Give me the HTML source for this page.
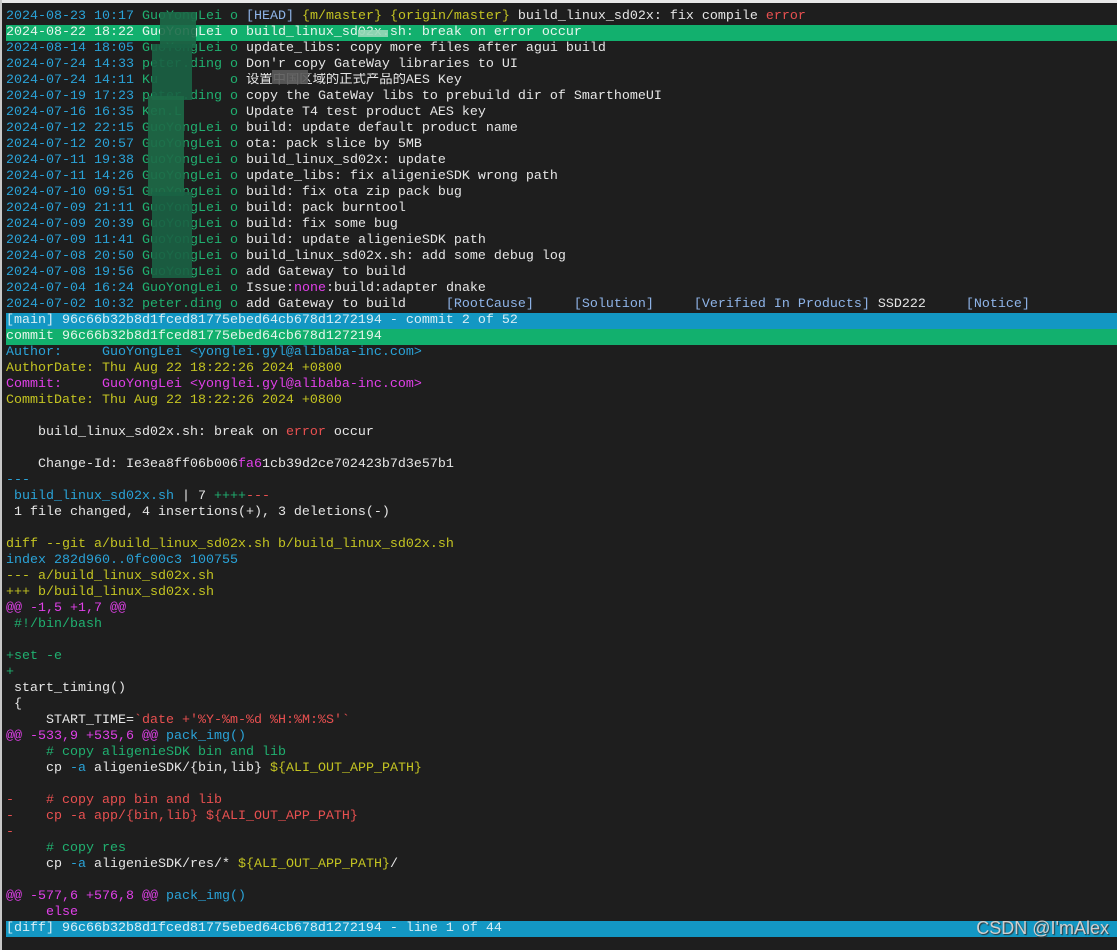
<!DOCTYPE html>
<html><head><meta charset="utf-8"><style>
html,body{margin:0;padding:0;}
body{width:1117px;height:950px;background:#1e1e1e;position:relative;overflow:hidden;}
.top{position:absolute;left:0;top:0;width:1117px;height:3px;background:#e8e8e8;}
.lft{position:absolute;left:0;top:0;width:2px;height:950px;background:#c8c8c8;}
pre{position:absolute;left:6px;top:9px;margin:0;font-family:"Liberation Mono","Noto Sans CJK SC",monospace;font-size:13.33px;line-height:16px;color:#e6e6e6;white-space:pre;}
.l{display:block;height:16px;overflow:hidden;}
.b{color:#2aa3d8}.g{color:#20b070}.y{color:#c4c422}.m{color:#e040e8}.r{color:#e85050}.bl{color:#8fb4e8}
.hg{background:#12b06e;color:#e6f5ec;width:1111px}
.hb{background:#1397c3;color:#d8eef6;width:1111px}
.blob{position:absolute;background:#1c6a48;opacity:.9}
.wm{position:absolute;right:8px;top:918px;font-family:"Liberation Sans",sans-serif;font-size:18px;color:#cfcfcf;text-shadow:1px 1px 1px #333;}
</style></head><body>
<div class="top"></div><div class="lft"></div>
<pre><span class="l"><span class="b">2024-08-23 10:17</span> <span class="g">GuoYongLei o</span> <span class="bl">[HEAD]</span> <span class="y">{m/master} {origin/master}</span> build_linux_sd02x: fix compile <span class="r">error</span></span><span class="l hg">2024-08-22 18:22 GuoYongLei o build_linux_sd02x.sh: break on error occur</span><span class="l"><span class="b">2024-08-14 18:05</span> <span class="g">GuoYongLei o</span> update_libs: copy more files after agui build</span><span class="l"><span class="b">2024-07-24 14:33</span> <span class="g">peter.ding o</span> Don'r copy GateWay libraries to UI</span><span class="l"><span class="b">2024-07-24 14:11</span> <span class="g">Ku         o</span> 设置中国区域的正式产品的AES Key</span><span class="l"><span class="b">2024-07-19 17:23</span> <span class="g">peter.ding o</span> copy the GateWay libs to prebuild dir of SmarthomeUI</span><span class="l"><span class="b">2024-07-16 16:35</span> <span class="g">Ken.L      o</span> Update T4 test product AES key</span><span class="l"><span class="b">2024-07-12 22:15</span> <span class="g">GuoYongLei o</span> build: update default product name</span><span class="l"><span class="b">2024-07-12 20:57</span> <span class="g">GuoYongLei o</span> ota: pack slice by 5MB</span><span class="l"><span class="b">2024-07-11 19:38</span> <span class="g">GuoYongLei o</span> build_linux_sd02x: update</span><span class="l"><span class="b">2024-07-11 14:26</span> <span class="g">GuoYongLei o</span> update_libs: fix aligenieSDK wrong path</span><span class="l"><span class="b">2024-07-10 09:51</span> <span class="g">GuoYongLei o</span> build: fix ota zip pack bug</span><span class="l"><span class="b">2024-07-09 21:11</span> <span class="g">GuoYongLei o</span> build: pack burntool</span><span class="l"><span class="b">2024-07-09 20:39</span> <span class="g">GuoYongLei o</span> build: fix some bug</span><span class="l"><span class="b">2024-07-09 11:41</span> <span class="g">GuoYongLei o</span> build: update aligenieSDK path</span><span class="l"><span class="b">2024-07-08 20:50</span> <span class="g">GuoYongLei o</span> build_linux_sd02x.sh: add some debug log</span><span class="l"><span class="b">2024-07-08 19:56</span> <span class="g">GuoYongLei o</span> add Gateway to build</span><span class="l"><span class="b">2024-07-04 16:24</span> <span class="g">GuoYongLei o</span> Issue:<span class="m">none</span>:build:adapter dnake</span><span class="l"><span class="b">2024-07-02 10:32</span> <span class="g">peter.ding o</span> add Gateway to build     <span class="bl">[RootCause]</span>     <span class="bl">[Solution]</span>     <span class="bl">[Verified In Products]</span> SSD222     <span class="bl">[Notice]</span></span><span class="l hb">[main] 96c66b32b8d1fced81775ebed64cb678d1272194 - commit 2 of 52</span><span class="l hg">commit 96c66b32b8d1fced81775ebed64cb678d1272194</span><span class="l"><span class="b">Author:     GuoYongLei &lt;yonglei.gyl@alibaba-inc.com&gt;</span></span><span class="l"><span class="y">AuthorDate: Thu Aug 22 18:22:26 2024 +0800</span></span><span class="l"><span class="m">Commit:     GuoYongLei &lt;yonglei.gyl@alibaba-inc.com&gt;</span></span><span class="l"><span class="y">CommitDate: Thu Aug 22 18:22:26 2024 +0800</span></span><span class="l"> </span><span class="l">    build_linux_sd02x.sh: break on <span class="r">error</span> occur</span><span class="l"> </span><span class="l">    Change-Id: Ie3ea8ff06b006<span class="m">fa6</span>1cb39d2ce702423b7d3e57b1</span><span class="l"><span class="b">---</span></span><span class="l"> <span class="b">build_linux_sd02x.sh</span> | 7 <span class="g">++++</span><span class="r">---</span></span><span class="l"> 1 file changed, 4 insertions(+), 3 deletions(-)</span><span class="l"> </span><span class="l"><span class="y">diff --git a/build_linux_sd02x.sh b/build_linux_sd02x.sh</span></span><span class="l"><span class="b">index 282d960..0fc00c3 100755</span></span><span class="l"><span class="y">--- a/build_linux_sd02x.sh</span></span><span class="l"><span class="y">+++ b/build_linux_sd02x.sh</span></span><span class="l"><span class="m">@@ -1,5 +1,7 @@</span></span><span class="l"> <span class="g">#!/bin/bash</span></span><span class="l"> </span><span class="l"><span class="g">+set -e</span></span><span class="l"><span class="g">+</span></span><span class="l"> start_timing()</span><span class="l"> {</span><span class="l">     START_TIME=<span class="r">`date +'%Y-%m-%d %H:%M:%S'`</span></span><span class="l"><span class="m">@@ -533,9 +535,6 @@</span> <span class="b">pack_img()</span></span><span class="l">     <span class="g"># copy aligenieSDK bin and lib</span></span><span class="l">     cp <span class="b">-a</span> aligenieSDK/{bin,lib} <span class="y">${ALI_OUT_APP_PATH}</span></span><span class="l"> </span><span class="l"><span class="r">-    # copy app bin and lib</span></span><span class="l"><span class="r">-    cp -a app/{bin,lib} ${ALI_OUT_APP_PATH}</span></span><span class="l"><span class="r">-</span></span><span class="l">     <span class="g"># copy res</span></span><span class="l">     cp <span class="b">-a</span> aligenieSDK/res/* <span class="y">${ALI_OUT_APP_PATH}</span>/</span><span class="l"> </span><span class="l"><span class="m">@@ -577,6 +576,8 @@</span> <span class="b">pack_img()</span></span><span class="l">     <span class="m">else</span></span><span class="l hb">[diff] 96c66b32b8d1fced81775ebed64cb678d1272194 - line 1 of 44</span></pre>
<div class="blob" style="left:160px;top:12px;width:36px;height:36px;"></div>
<div class="blob" style="left:152px;top:44px;width:40px;height:56px;background:#1a6244"></div>
<div class="blob" style="left:148px;top:96px;width:36px;height:100px;background:#1d6a47"></div>
<div class="blob" style="left:152px;top:192px;width:40px;height:86px;background:#1a6244"></div>
<div class="blob" style="left:272px;top:70px;width:36px;height:14px;background:#5a5a5a"></div>
<div class="blob" style="left:358px;top:30px;width:30px;height:7px;background:#9ad8b8"></div>
<div class="wm">CSDN @I'mAlex</div>
</body></html>
